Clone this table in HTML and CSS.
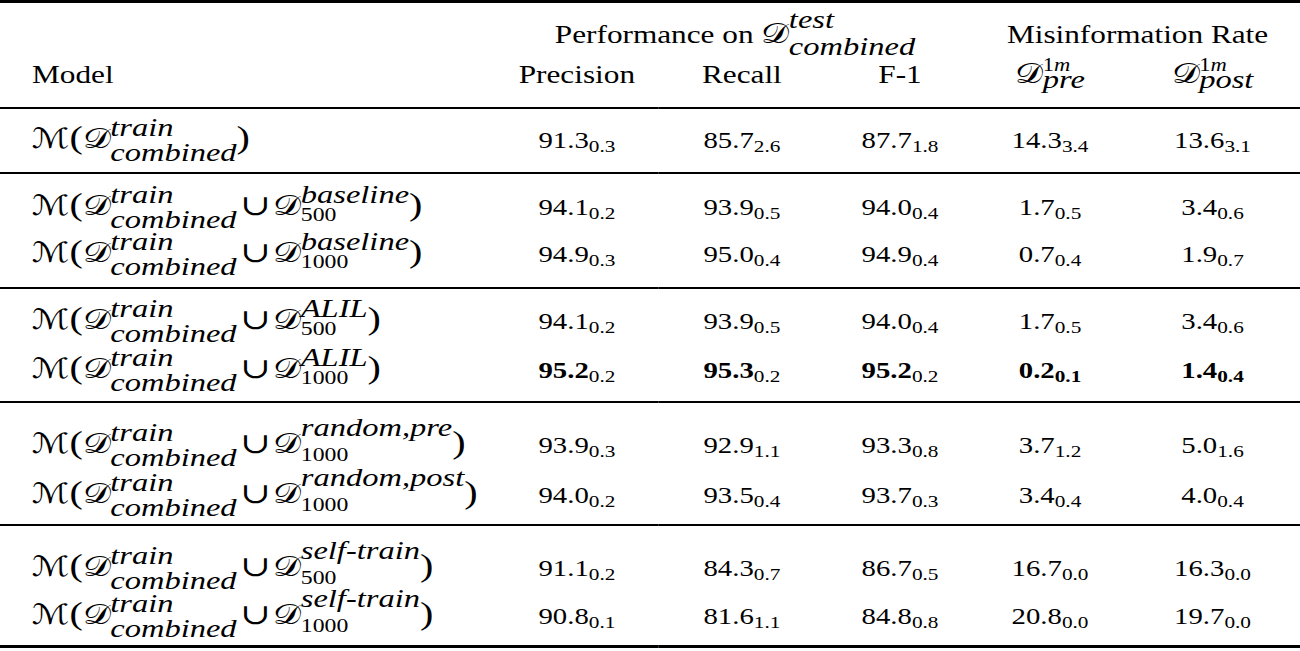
FILE: index.html
```html
<!DOCTYPE html>
<html>
<head>
<meta charset="utf-8">
<link rel="stylesheet" href="styles.css">
</head>
<body>
<table class="tbl">
<colgroup><col class="c0"><col class="c1"><col class="c2"><col class="c3"><col class="c4"><col class="c5"></colgroup>
<thead>
<tr class="h1">
<th></th>
<th colspan="3">Performance on <span class="cal">𝒟</span><span class="ss h"><span class="sup">test</span><span class="sub">combined</span></span></th>
<th colspan="2">Misinformation Rate</th>
</tr>
<tr class="h2">
<th class="model">Model</th>
<th>Precision</th>
<th>Recall</th>
<th>F-1</th>
<th><span class="cal">𝒟</span><span class="ss m"><span class="sup"><span class="rm">1</span>m</span><span class="sub">pre</span></span></th>
<th><span class="cal">𝒟</span><span class="ss m"><span class="sup"><span class="rm">1</span>m</span><span class="sub">post</span></span></th>
</tr>
</thead>
<tbody class="g g1">
<tr class="r1">
<td class="model"><span class="cal">ℳ</span><span class="par">(</span><span class="cal">𝒟</span><span class="ss"><span class="sup">train</span><span class="sub">combined</span></span><span class="par">)</span></td>
<td><span class="v">91.3<span class="e">0.3</span></span></td>
<td><span class="v">85.7<span class="e">2.6</span></span></td>
<td><span class="v">87.7<span class="e">1.8</span></span></td>
<td><span class="v">14.3<span class="e">3.4</span></span></td>
<td><span class="v">13.6<span class="e">3.1</span></span></td>
</tr>
</tbody>
<tbody class="g g2">
<tr class="r1">
<td class="model"><span class="cal">ℳ</span><span class="par">(</span><span class="cal">𝒟</span><span class="ss"><span class="sup">train</span><span class="sub">combined</span></span><span class="cup">∪</span><span class="cal">𝒟</span><span class="ss d"><span class="sup">baseline</span><span class="sub">500</span></span><span class="par">)</span></td>
<td><span class="v">94.1<span class="e">0.2</span></span></td>
<td><span class="v">93.9<span class="e">0.5</span></span></td>
<td><span class="v">94.0<span class="e">0.4</span></span></td>
<td><span class="v">1.7<span class="e">0.5</span></span></td>
<td><span class="v">3.4<span class="e">0.6</span></span></td>
</tr>
<tr class="r2">
<td class="model"><span class="cal">ℳ</span><span class="par">(</span><span class="cal">𝒟</span><span class="ss"><span class="sup">train</span><span class="sub">combined</span></span><span class="cup">∪</span><span class="cal">𝒟</span><span class="ss d"><span class="sup">baseline</span><span class="sub">1000</span></span><span class="par">)</span></td>
<td><span class="v">94.9<span class="e">0.3</span></span></td>
<td><span class="v">95.0<span class="e">0.4</span></span></td>
<td><span class="v">94.9<span class="e">0.4</span></span></td>
<td><span class="v">0.7<span class="e">0.4</span></span></td>
<td><span class="v">1.9<span class="e">0.7</span></span></td>
</tr>
</tbody>
<tbody class="g g3">
<tr class="r1">
<td class="model"><span class="cal">ℳ</span><span class="par">(</span><span class="cal">𝒟</span><span class="ss"><span class="sup">train</span><span class="sub">combined</span></span><span class="cup">∪</span><span class="cal">𝒟</span><span class="ss d"><span class="sup">ALIL</span><span class="sub">500</span></span><span class="par">)</span></td>
<td><span class="v">94.1<span class="e">0.2</span></span></td>
<td><span class="v">93.9<span class="e">0.5</span></span></td>
<td><span class="v">94.0<span class="e">0.4</span></span></td>
<td><span class="v">1.7<span class="e">0.5</span></span></td>
<td><span class="v">3.4<span class="e">0.6</span></span></td>
</tr>
<tr class="r2">
<td class="model"><span class="cal">ℳ</span><span class="par">(</span><span class="cal">𝒟</span><span class="ss"><span class="sup">train</span><span class="sub">combined</span></span><span class="cup">∪</span><span class="cal">𝒟</span><span class="ss d"><span class="sup">ALIL</span><span class="sub">1000</span></span><span class="par">)</span></td>
<td><span class="v"><b class="bd">95.2</b><span class="e">0.2</span></span></td>
<td><span class="v"><b class="bd">95.3</b><span class="e">0.2</span></span></td>
<td><span class="v"><b class="bd">95.2</b><span class="e">0.2</span></span></td>
<td><span class="v bx">0.2<span class="e">0.1</span></span></td>
<td><span class="v bx">1.4<span class="e">0.4</span></span></td>
</tr>
</tbody>
<tbody class="g g4">
<tr class="r1">
<td class="model"><span class="cal">ℳ</span><span class="par">(</span><span class="cal">𝒟</span><span class="ss"><span class="sup">train</span><span class="sub">combined</span></span><span class="cup">∪</span><span class="cal">𝒟</span><span class="ss d t"><span class="sup">random,pre</span><span class="sub">1000</span></span><span class="par">)</span></td>
<td><span class="v">93.9<span class="e">0.3</span></span></td>
<td><span class="v">92.9<span class="e">1.1</span></span></td>
<td><span class="v">93.3<span class="e">0.8</span></span></td>
<td><span class="v">3.7<span class="e">1.2</span></span></td>
<td><span class="v">5.0<span class="e">1.6</span></span></td>
</tr>
<tr class="r2">
<td class="model"><span class="cal">ℳ</span><span class="par">(</span><span class="cal">𝒟</span><span class="ss"><span class="sup">train</span><span class="sub">combined</span></span><span class="cup">∪</span><span class="cal">𝒟</span><span class="ss d t"><span class="sup">random,post</span><span class="sub">1000</span></span><span class="par">)</span></td>
<td><span class="v">94.0<span class="e">0.2</span></span></td>
<td><span class="v">93.5<span class="e">0.4</span></span></td>
<td><span class="v">93.7<span class="e">0.3</span></span></td>
<td><span class="v">3.4<span class="e">0.4</span></span></td>
<td><span class="v">4.0<span class="e">0.4</span></span></td>
</tr>
</tbody>
<tbody class="g g5">
<tr class="r1">
<td class="model"><span class="cal">ℳ</span><span class="par">(</span><span class="cal">𝒟</span><span class="ss"><span class="sup">train</span><span class="sub">combined</span></span><span class="cup">∪</span><span class="cal">𝒟</span><span class="ss d t"><span class="sup">self-train</span><span class="sub">500</span></span><span class="par">)</span></td>
<td><span class="v">91.1<span class="e">0.2</span></span></td>
<td><span class="v">84.3<span class="e">0.7</span></span></td>
<td><span class="v">86.7<span class="e">0.5</span></span></td>
<td><span class="v">16.7<span class="e">0.0</span></span></td>
<td><span class="v">16.3<span class="e">0.0</span></span></td>
</tr>
<tr class="r2">
<td class="model"><span class="cal">ℳ</span><span class="par">(</span><span class="cal">𝒟</span><span class="ss"><span class="sup">train</span><span class="sub">combined</span></span><span class="cup">∪</span><span class="cal">𝒟</span><span class="ss d t"><span class="sup">self-train</span><span class="sub">1000</span></span><span class="par">)</span></td>
<td><span class="v">90.8<span class="e">0.1</span></span></td>
<td><span class="v">81.6<span class="e">1.1</span></span></td>
<td><span class="v">84.8<span class="e">0.8</span></span></td>
<td><span class="v">20.8<span class="e">0.0</span></span></td>
<td><span class="v">19.7<span class="e">0.0</span></span></td>
</tr>
</tbody>
</table>
</body>
</html>
```
FILE: styles.css
```css
html, body {
  margin: 0;
  padding: 0;
  background: #ffffff;
  color: #000000;
  font-family: "Liberation Serif", "Times New Roman", serif;
}

.tbl {
  width: 1040px;
  border-collapse: separate;
  border-spacing: 0;
  table-layout: fixed;
  transform: scaleX(1.25);
  transform-origin: 0 0;
  font-size: 25px;
}

.c0 { width: 396px; }
.c1 { width: 131px; }
.c2 { width: 133px; }
.c3 { width: 120px; }
.c4 { width: 120px; }
.c5 { width: 140px; }

th, td {
  padding: 0;
  line-height: 36px;
  vertical-align: top;
  text-align: center;
  font-weight: normal;
  white-space: nowrap;
}

.model {
  text-align: left;
  padding-left: 25.6px;
}

/* header */
.h1 th {
  border-top: 3px solid #000;
  padding-top: 13.5px;
  padding-bottom: 0.5px;
}
.h2 th {
  padding-top: 3.5px;
  padding-bottom: 14.5px;
}

/* body groups */
.g > tr:first-child > td { border-top: 2px solid #000; }
.g5 > tr:last-child > td { border-bottom: 3px solid #000; }

.g1 .r1 td { padding-top: 13px; padding-bottom: 14px; }
.g2 .r1 td { padding-top: 15px; padding-bottom: 11px; }
.g2 .r2 td { padding-bottom: 15px; }
.g3 .r1 td { padding-top: 14px; padding-bottom: 13px; }
.g3 .r2 td { padding-bottom: 13px; }
.g4 .r1 td { padding-top: 24px; padding-bottom: 14px; }
.g4 .r2 td { padding-bottom: 11px; }
.g5 .r1 td { padding-top: 24px; padding-bottom: 12px; }
.g5 .r2 td { padding-bottom: 11px; }

/* math */
.cal {
  font-family: "DejaVu Serif", "DejaVu Sans", "Noto Sans", serif;
  font-size: 28px;
  line-height: 0;
}
.par {
  font-size: 32px;
  line-height: 0;
}
.cup {
  font-family: "DejaVu Serif", "DejaVu Sans", serif;
  font-size: 29px;
  line-height: 0;
  margin: 0 2px 0 3px;
}
.ss {
  display: inline-block;
  vertical-align: -13px;
  text-align: left;
  font-style: italic;
  font-size: 26px;
}
.ss .sup, .ss .sub {
  display: block;
  line-height: 0;
}
.ss .sub { margin-top: 25px; }
.ss.d { vertical-align: -6px; }
.ss.d .sub {
  font-style: normal;
  font-size: 19px;
  margin-top: 20.3px;
}
.ss.d.t { vertical-align: -8px; }
.ss.d.t .sub { margin-top: 27.3px; }
.ss.h { vertical-align: -12px; }
.ss.h .sub { margin-top: 27px; }
.ss.m { vertical-align: -5.5px; }
.ss.m .sup { font-size: 18px; }
.ss.m .sub { margin-top: 15px; }
.rm { font-style: normal; }

/* numbers */
.v {
  font-size: 23px;
  line-height: 0;
}
.v .e {
  font-size: 17px;
  vertical-align: -4px;
}
.bd { font-weight: bold; }
.bx { font-weight: bold; }
```
